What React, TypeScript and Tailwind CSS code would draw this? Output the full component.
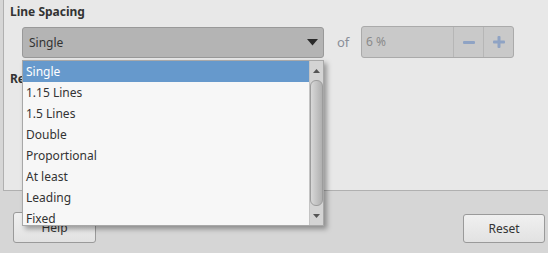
const options = ["Single", "1.15 Lines", "1.5 Lines", "Double", "Proportional", "At least", "Leading", "Fixed"];

function Tri({ up }: { up?: boolean }) {
  return (
    <svg width="7" height="4" viewBox="0 0 7 4">
      <path d={up ? "M0 4 L3.5 0 L7 4 Z" : "M0 0 L7 0 L3.5 4 Z"} fill="#555" />
    </svg>
  );
}

export default function App() {
  return (
    <div
      className="relative w-[548px] h-[253px] overflow-hidden bg-[#d6d6d6] text-[12px] text-[#333]"
      style={{ fontFamily: '"Noto Sans", "Open Sans", sans-serif' }}
    >
      {/* upper panel */}
      <div className="ml-[3px] h-[191px] bg-[#e8e8e8] border-l border-b border-[#b0b0b0] pl-[6px] pt-[3px]">
        <div className="font-bold leading-[18px]">Line Spacing</div>
        <div className="flex items-center mt-[6px] ml-[12px]">
          <div className="w-[302px] h-[31px] rounded-[3px] border border-[#999] bg-[#b4b4b4] flex items-center justify-between pl-[6px] pr-[4px]">
            <span>Single</span>
            <svg width="11" height="7" viewBox="0 0 11 7" className="mr-[1px]">
              <path d="M0 0 L11 0 L5.5 6.5 Z" fill="#2a2a2a" />
            </svg>
          </div>
          <span className="ml-[13px] w-[24px] text-[#8a8f99] text-[13px]">of</span>
          <div className="w-[153px] h-[32px] -mt-[1px] rounded-[3px] border border-[#aaa] bg-[#c9c9c9] flex">
            <div className="flex-1 flex items-center pl-[4px] text-[#8b8b8b]">6 %</div>
            <div className="w-[30px] border-l border-[#b6b6b6] flex items-center justify-center">
              <div className="w-[12px] h-[3px] rounded-[1px] bg-[#8fa3c4]" />
            </div>
            <div className="w-[30px] border-l border-[#b6b6b6] flex items-center justify-center">
              <svg width="12" height="12" viewBox="0 0 12 12">
                <rect x="0" y="4.5" width="12" height="3" rx="1" fill="#8fa3c4" />
                <rect x="4.5" y="0" width="3" height="12" rx="1" fill="#8fa3c4" />
              </svg>
            </div>
          </div>
        </div>
        <div className="font-bold leading-[18px] mt-[12px]">Re</div>
      </div>

      {/* bottom buttons */}
      <div className="flex justify-between items-start px-[3px]">
        <button className="ml-[10px] mt-[21px] w-[83px] h-[31px] rounded-[3px] border border-[#9a9a9a] bg-gradient-to-b from-[#f0f0f0] to-[#e2e2e2] text-[#333]">
          Help
        </button>
        <button className="mt-[23px] w-[82px] h-[29px] rounded-[3px] border border-[#9a9a9a] bg-gradient-to-b from-[#f0f0f0] to-[#e2e2e2] text-[#333]">
          Reset
        </button>
      </div>

      {/* dropdown popup */}
      <div className="absolute left-[22px] top-[60px] w-[302px] h-[166px] bg-[#f7f7f7] border border-[#a8a8a8] shadow-[3px_3px_5px_rgba(0,0,0,0.35)] flex">
        <div className="flex-1 overflow-hidden">
          {options.map((o, i) => (
            <div
              key={o}
              className={`h-[21px] leading-[21px] pl-[3px] ${i === 0 ? "bg-[#6699cc] text-white" : ""}`}
            >
              {o}
            </div>
          ))}
        </div>
        <div className="w-[14px] bg-[#d4d4d4] border-l border-[#c4c4c4] flex flex-col items-center">
          <div className="h-[19px] flex items-center justify-center">
            <Tri up />
          </div>
          <div className="w-[13px] flex-1 rounded-[6px] border border-[#9c9c9c] bg-gradient-to-r from-[#d8d8d8] via-[#c4c4c4] to-[#b0b0b0]" />
          <div className="h-[19px] flex items-center justify-center">
            <Tri />
          </div>
        </div>
      </div>
    </div>
  );
}
